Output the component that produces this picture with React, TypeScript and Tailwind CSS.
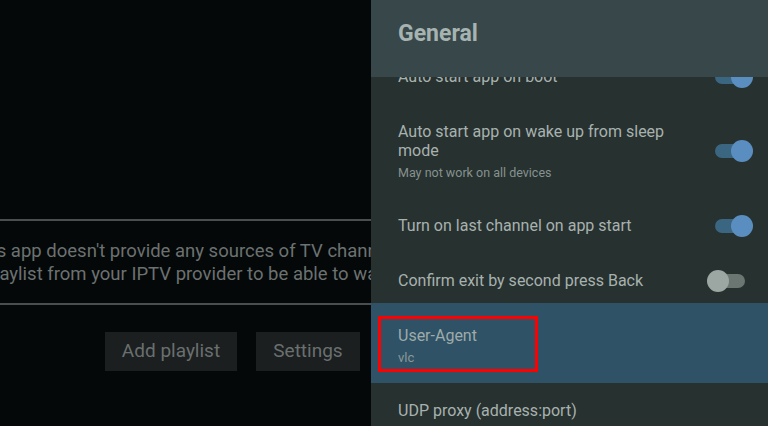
import React from "react";

const font = { fontFamily: "Roboto, 'Noto Sans', sans-serif" };

interface ToggleProps {
  on: boolean;
}

const Toggle: React.FC<ToggleProps> = ({ on }) => {
  return (
    <div className="relative w-[46px] h-[22px] shrink-0">
      <div
        className={
          "absolute left-[8px] right-[8px] top-[4px] h-[14px] rounded-full " +
          (on ? "bg-[#3a6682]" : "bg-[#6b7673]")
        }
      />
      <div
        className={
          "absolute top-0 w-[22px] h-[22px] rounded-full " +
          (on ? "right-0 bg-[#5b8ec0]" : "left-0 bg-[#9ca6a3]")
        }
      />
    </div>
  );
};

interface RowProps {
  title: string;
  subtitle?: string;
  toggle?: boolean;
  className?: string;
  titleClass?: string;
}

const SettingRow: React.FC<RowProps> = ({ title, subtitle, toggle, className, titleClass }) => {
  return (
    <div className={"flex items-center pl-[27px] pr-[15px] shrink-0 " + (className ?? "")}>
      <div className="flex-1">
        <div className={"text-[16px] leading-[19.5px] text-[#a7b2af] " + (titleClass ?? "")}>{title}</div>
        {subtitle && (
          <div className="text-[12.5px] leading-[16px] mt-[4px] text-[#86928f]">{subtitle}</div>
        )}
      </div>
      {toggle !== undefined && <Toggle on={toggle} />}
    </div>
  );
};

export default function App() {
  return (
    <div className="w-[768px] h-[426px] flex overflow-hidden bg-[#040808]" style={font}>
      {/* left: empty playlist screen */}
      <div className="w-[371px] h-full flex flex-col overflow-hidden shrink-0">
        <div className="h-[219px] shrink-0" />
        <div className="h-[2px] bg-[#4a4e4f] shrink-0" />
        <div className="pt-[19px] pb-[17px] text-[18.5px] leading-[23px] text-[#6c7171] whitespace-nowrap">
          <div className="ml-[-29px]">This app doesn't provide any sources of TV channels.</div>
          <div className="ml-[-53px]">Add playlist from your IPTV provider to be able to watch TV.</div>
        </div>
        <div className="h-[2px] bg-[#4a4e4f] shrink-0" />
        <div className="flex gap-[19px] pl-[105px] mt-[27px]">
          <div className="w-[132px] h-[39px] flex items-center justify-center bg-[#1b1f20] text-[19px] text-[#6a6f6f]">
            Add playlist
          </div>
          <div className="w-[104px] h-[39px] flex items-center justify-center bg-[#1b1f20] text-[19px] text-[#6a6f6f]">
            Settings
          </div>
        </div>
      </div>

      {/* right: settings panel */}
      <div className="flex-1 h-full flex flex-col bg-[#27312f]">
        <div className="h-[77px] shrink-0 bg-[#37474a] flex items-center pl-[27px] pb-[9px] relative z-10">
          <span className="text-[23px] font-bold text-[#a6b3b0]">General</span>
        </div>
        <div className="flex-1 flex flex-col overflow-hidden">
          <SettingRow title="Auto start app on boot" toggle={true} className="h-[55px] mt-[-28px]" />
          <SettingRow
            title="Auto start app on wake up from sleep mode"
            subtitle="May not work on all devices"
            toggle={true}
            className="h-[94px]"
            titleClass="max-w-[290px]"
          />
          <SettingRow title="Turn on last channel on app start" toggle={true} className="h-[55px]" />
          <SettingRow title="Confirm exit by second press Back" toggle={false} className="h-[50px] pt-[6px]" />
          <div className="relative h-[80px] shrink-0 bg-[#2f5266] flex flex-col pl-[27px] pt-[23px]">
            <div className="text-[16px] leading-[20px] text-[#9eabaa]">User-Agent</div>
            <div className="text-[13px] leading-[16px] mt-[4px] text-[#8a9897]">vlc</div>
            <div className="absolute left-[7px] top-[13px] w-[160px] h-[56px] border-[3px] border-[#ff0000]" />
          </div>
          <SettingRow title="UDP proxy (address:port)" className="h-[55px]" />
        </div>
      </div>
    </div>
  );
}
